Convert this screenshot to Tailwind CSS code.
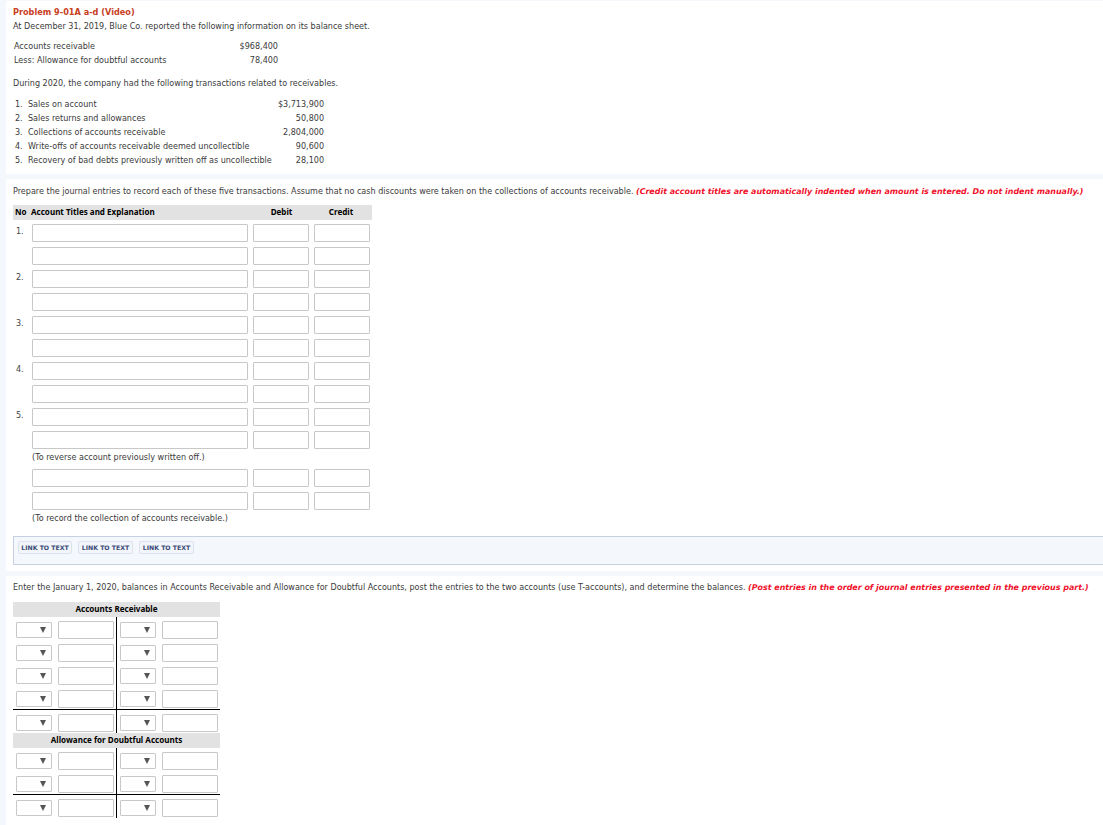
<!DOCTYPE html>
<html lang="en">
<head>
    <meta charset="UTF-8">
    <title>Problem 9-01A a-d (Video)</title>
    <script src="https://cdn.jsdelivr.net/npm/@tailwindcss/browser@4"></script>
</head>
<body class="bg-[#f4f7fb] font-['DejaVu_Sans',sans-serif] text-[8.06px] leading-[14px] text-[#3a3a3a] overflow-hidden">
    <div class="w-[1103px] h-[825px] overflow-hidden pl-[6px] pt-px">
        <!-- Problem statement -->
        <section class="bg-white h-[173px] pl-[7px] pt-[4px]">
            <h1 class="font-bold text-[#c8401e] text-[8.16px]">Problem 9-01A a-d (Video)</h1>
            <p class="mt-px">At December 31, 2019, Blue Co. reported the following information on its balance sheet.</p>
            <div class="mt-[6px] ml-px w-[264px]">
                <div class="flex justify-between h-[14px]"><span>Accounts receivable</span><span>$968,400</span></div>
                <div class="flex justify-between h-[14px]"><span>Less: Allowance for doubtful accounts</span><span>78,400</span></div>
            </div>
            <p class="mt-[9px]">During 2020, the company had the following transactions related to receivables.</p>
            <div class="mt-[7px] ml-[2px] w-[309px]" id="transactions"></div>
        </section>

        <!-- Journal entries -->
        <section class="bg-white h-[392px] mt-[5px] pl-[7px] pt-[6px]">
            <p class="whitespace-nowrap">Prepare the journal entries to record each of these five transactions. Assume that no cash discounts were taken on the collections of accounts receivable. <b class="italic text-[7.95px] text-[#f0112b]">(Credit account titles are automatically indented when amount is entered. Do not indent manually.)</b></p>
            <div class="mt-[6px] w-[359px] h-[15px] pb-[2px] bg-[#e2e2e2] flex items-center font-bold font-['Noto_Sans',sans-serif] text-black text-[8.05px]">
                <span class="w-[18px] pl-[2px]">No</span>
                <span class="w-[222px]">Account Titles and Explanation</span>
                <span class="w-[57px] text-center">Debit</span>
                <span class="w-[62px] text-center">Credit</span>
            </div>
            <div id="journal" class="mt-[4px]"></div>
            <div class="mt-[6px] w-[1091px] h-[29px] bg-[#f4f7fb] border border-[#c7d0e0] pl-[4px] pt-[4px] flex gap-[6px]">
                <span class="w-[54px] h-[13px] border border-[#dde3ec] rounded-[2px] bg-[#f2f5f9] text-[#3b4a78] font-bold text-[6.2px] leading-[11px] text-center">LINK TO TEXT</span>
                <span class="w-[55px] h-[13px] border border-[#dde3ec] rounded-[2px] bg-[#f2f5f9] text-[#3b4a78] font-bold text-[6.2px] leading-[11px] text-center">LINK TO TEXT</span>
                <span class="w-[55px] h-[13px] border border-[#dde3ec] rounded-[2px] bg-[#f2f5f9] text-[#3b4a78] font-bold text-[6.2px] leading-[11px] text-center">LINK TO TEXT</span>
            </div>
        </section>

        <!-- T-accounts -->
        <section class="bg-white h-[260px] mt-[5px] pl-[7px] pt-[5px]">
            <p class="whitespace-nowrap">Enter the January 1, 2020, balances in Accounts Receivable and Allowance for Doubtful Accounts, post the entries to the two accounts (use T-accounts), and determine the balances. <b class="italic text-[7.95px] text-[#f0112b]">(Post entries in the order of journal entries presented in the previous part.)</b></p>
            <div class="mt-[7px] w-[207px]">
                <div class="h-[15px] bg-[#e2e2e2] text-center font-bold font-['Noto_Sans',sans-serif] text-black text-[8.05px] leading-[13px]">Accounts Receivable</div>
                <div id="receivable"></div>
                <div class="h-[15px] bg-[#e2e2e2] text-center font-bold font-['Noto_Sans',sans-serif] text-black text-[8.05px] leading-[13px]">Allowance for Doubtful Accounts</div>
                <div id="allowance"></div>
            </div>
        </section>
    </div>

    <script>
        const transactions = [
            ['1.', 'Sales on account', '$3,713,900'],
            ['2.', 'Sales returns and allowances', '50,800'],
            ['3.', 'Collections of accounts receivable', '2,804,000'],
            ['4.', 'Write-offs of accounts receivable deemed uncollectible', '90,600'],
            ['5.', 'Recovery of bad debts previously written off as uncollectible', '28,100']
        ];

        document.getElementById('transactions').innerHTML = transactions.map(t => `
            <div class="flex h-[14px]">
                <span class="w-[13px]">${t[0]}</span>
                <span class="flex-1">${t[1]}</span>
                <span>${t[2]}</span>
            </div>
        `).join('');

        const box = 'block h-[18px] bg-white border border-[#c8c8c8] rounded-[1px]';

        function journalRow(no) {
            return `
                <div class="flex h-[23px] text-[#444]">
                    <span class="w-[19px] pl-[3px] leading-[15px]">${no}</span>
                    <span class="${box} w-[216px]"></span>
                    <span class="${box} w-[56px] ml-[5px]"></span>
                    <span class="${box} w-[56px] ml-[5px]"></span>
                </div>`;
        }

        function note(text) {
            return `<p class="ml-[19px] h-[17px] leading-[11px] mt-[-2px]">${text}</p>`;
        }

        document.getElementById('journal').innerHTML =
            ['1.', '', '2.', '', '3.', '', '4.', '', '5.', ''].map(journalRow).join('') +
            note('(To reverse account previously written off.)') +
            ['', ''].map(journalRow).join('') +
            note('(To record the collection of accounts receivable.)');

        function tSide(extra) {
            return `
                <div class="flex items-start shrink-0 pt-[4px] ${extra}">
                    <span class="relative mt-px h-[16px] w-[36px] bg-white border border-[#c8c8c8] rounded-[1px]">
                        <span class="absolute right-[5px] top-[4px] w-0 h-0 border-x-[3.5px] border-x-transparent border-t-[6px] border-t-[#555]"></span>
                    </span>
                    <span class="${box} w-[56px] ml-[6px]"></span>
                </div>`;
        }

        // last row of each account sits under the total rule
        function tRow(ruled) {
            return `
                <div class="flex pl-[3px] ${ruled ? 'h-[24px] border-t border-black' : 'h-[23px]'}">
                    ${tSide('w-[101px] border-r border-black')}
                    ${tSide('w-[103px] pl-[3px]')}
                </div>`;
        }

        document.getElementById('receivable').innerHTML = [0, 0, 0, 0, 1].map(tRow).join('');
        document.getElementById('allowance').innerHTML = [0, 0, 1].map(tRow).join('');
    </script>
</body>
</html>
